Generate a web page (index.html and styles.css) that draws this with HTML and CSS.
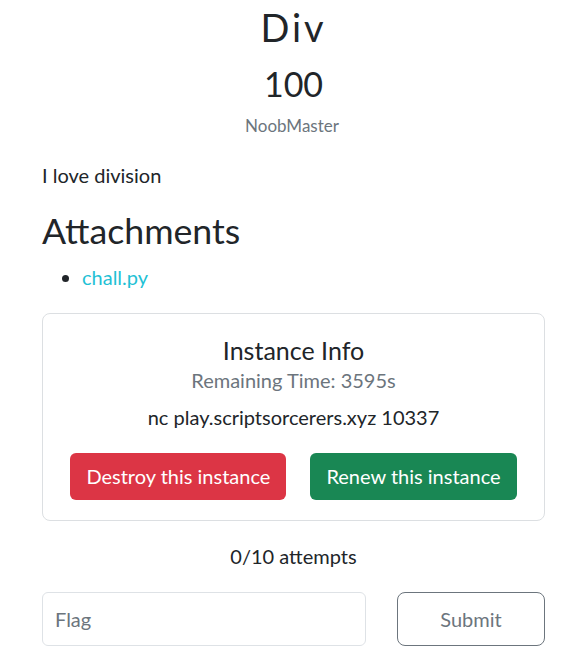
FILE: index.html
```html
<!DOCTYPE html>
<html lang="en">
<head>
    <meta charset="UTF-8">
    <meta name="viewport" content="width=device-width, initial-scale=1.0">
    <title>Div</title>
    <link rel="stylesheet" href="styles.css">
</head>
<body>
    <div class="challenge">
        <h2 class="challenge-name">Div</h2>
        <h3 class="challenge-value">100</h3>
        <p class="challenge-author">NoobMaster</p>

        <p class="challenge-desc">I love division</p>

        <h3 class="attachments-title">Attachments</h3>
        <ul class="attachments">
            <li><a href="#">chall.py</a></li>
        </ul>

        <!-- Instance box -->
        <div class="instance-card">
            <h4 class="instance-title">Instance Info</h4>
            <p class="instance-time">Remaining Time: 3595s</p>
            <p class="instance-conn">nc play.scriptsorcerers.xyz 10337</p>
            <div class="instance-actions">
                <button class="btn btn-danger">Destroy this instance</button>
                <button class="btn btn-success">Renew this instance</button>
            </div>
        </div>

        <p class="attempts">0/10 attempts</p>

        <div class="submit-row">
            <input type="text" class="flag-input" placeholder="Flag">
            <button class="btn btn-outline">Submit</button>
        </div>
    </div>
</body>
</html>
```

FILE: styles.css
```css
html, body {
    margin: 0;
    padding: 0;
    background-color: #fff;
    font-family: Lato, "Open Sans", sans-serif;
    color: #212529;
}

.challenge {
    display: flex;
    flex-direction: column;
    padding: 4px 28px 0 42px;
}

h2, h3, h4, p, ul {
    margin: 0;
    font-weight: 400;
}

.challenge-name {
    text-align: center;
    font-size: 38px;
    line-height: 46px;
    letter-spacing: 3px;
}

.challenge-value {
    text-align: center;
    font-size: 34px;
    line-height: 40px;
    margin-top: 14px;
}

.challenge-author {
    text-align: center;
    font-size: 17px;
    line-height: 24px;
    color: #6c757d;
    margin-top: 10px;
    padding-right: 3px;
}

.challenge-desc {
    font-size: 20px;
    line-height: 30px;
    margin-top: 22px;
}

.attachments-title {
    font-size: 35.7px;
    line-height: 42px;
    margin-top: 20px;
}

.attachments {
    padding-left: 40px;
    font-size: 20px;
    line-height: 30px;
    margin-top: 10px;
}

.attachments a {
    color: #1fc1d5;
    text-decoration: none;
}

/* Instance info card */
.instance-card {
    margin-top: 21px;
    border: 1px solid #dcdfe2;
    border-radius: 8px;
    padding: 21px 0 20px;
    display: flex;
    flex-direction: column;
    align-items: center;
}

.instance-title {
    font-size: 25px;
    line-height: 30px;
}

.instance-time {
    font-size: 20px;
    line-height: 30px;
    color: #6c757d;
}

.instance-conn {
    font-size: 20px;
    line-height: 30px;
    margin-top: 7px;
}

.instance-actions {
    display: flex;
    gap: 24px;
    margin-top: 21px;
}

.btn {
    font-family: inherit;
    font-size: 20px;
    line-height: 29px;
    padding: 8px 15px;
    border: 1px solid transparent;
    border-radius: 6px;
    color: #fff;
    cursor: pointer;
}

.btn-danger {
    background-color: #dc3545;
}

.btn-success {
    background-color: #198754;
}

.attempts {
    text-align: center;
    font-size: 20px;
    line-height: 30px;
    margin-top: 20px;
}

.submit-row {
    display: flex;
    gap: 31px;
    margin-top: 21px;
}

.flag-input {
    flex: 1;
    height: 54px;
    box-sizing: border-box;
    padding: 0 12px;
    font-family: inherit;
    font-size: 20px;
    color: #212529;
    border: 1px solid #dee2e6;
    border-radius: 6px;
}

.flag-input::placeholder {
    color: #6c757d;
}

.btn-outline {
    width: 148px;
    height: 54px;
    background-color: #fff;
    color: #6c757d;
    border-color: #6c757d;
    border-radius: 8px;
}
```
